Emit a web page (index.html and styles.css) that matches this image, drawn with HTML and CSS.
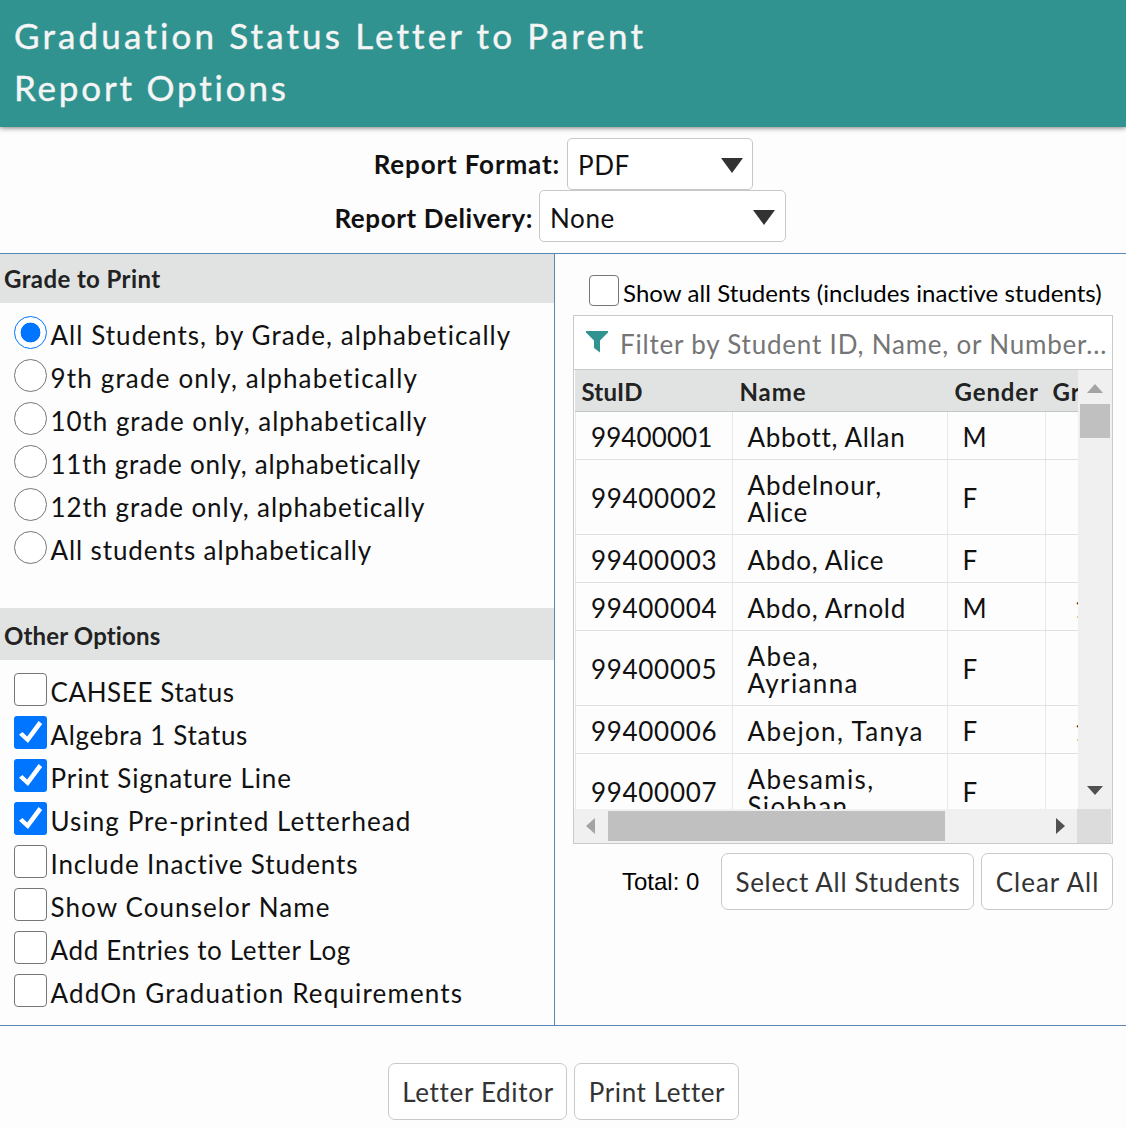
FILE: index.html
```html
<!DOCTYPE html>
<html lang="en">
<head>
<meta charset="utf-8">
<title>Graduation Status Letter to Parent</title>
<link rel="stylesheet" href="styles.css">
</head>
<body>
<header class="title-bar">
  <div class="title-main">Graduation Status Letter to Parent</div>
  <div class="title-sub">Report Options</div>
</header>

<section class="report">
  <div class="report-row format">
    <span class="report-label">Report Format:</span>
    <div class="select"><span>PDF</span><svg width="22" height="15" viewBox="0 0 22 15"><path d="M0 0H22L11 15Z" fill="#333"/></svg></div>
  </div>
  <div class="report-row delivery">
    <span class="report-label">Report Delivery:</span>
    <div class="select"><span>None</span><svg width="22" height="15" viewBox="0 0 22 15"><path d="M0 0H22L11 15Z" fill="#333"/></svg></div>
  </div>
</section>

<main class="columns">
  <section class="options">
    <h2 class="section-head grade-head">Grade to Print</h2>
    <div class="grades">
      <label class="row"><i class="radio on"></i><span>All Students, by Grade, alphabetically</span></label>
      <label class="row"><i class="radio"></i><span>9th grade only, alphabetically</span></label>
      <label class="row"><i class="radio"></i><span>10th grade only, alphabetically</span></label>
      <label class="row"><i class="radio"></i><span>11th grade only, alphabetically</span></label>
      <label class="row"><i class="radio"></i><span>12th grade only, alphabetically</span></label>
      <label class="row"><i class="radio"></i><span>All students alphabetically</span></label>
    </div>
    <h2 class="section-head other-head">Other Options</h2>
    <div class="others">
      <label class="row"><i class="check"></i><span>CAHSEE Status</span></label>
      <label class="row"><svg class="tick" viewBox="0 0 33 33"><rect width="33" height="33" rx="3" fill="#0075ff"/><path d="M5 18.8L8.4 16L13.2 20.4L24.6 5L28.2 8L14 27Z" fill="#fff"/></svg><span>Algebra 1 Status</span></label>
      <label class="row"><svg class="tick" viewBox="0 0 33 33"><rect width="33" height="33" rx="3" fill="#0075ff"/><path d="M5 18.8L8.4 16L13.2 20.4L24.6 5L28.2 8L14 27Z" fill="#fff"/></svg><span>Print Signature Line</span></label>
      <label class="row"><svg class="tick" viewBox="0 0 33 33"><rect width="33" height="33" rx="3" fill="#0075ff"/><path d="M5 18.8L8.4 16L13.2 20.4L24.6 5L28.2 8L14 27Z" fill="#fff"/></svg><span>Using Pre-printed Letterhead</span></label>
      <label class="row"><i class="check"></i><span>Include Inactive Students</span></label>
      <label class="row"><i class="check"></i><span>Show Counselor Name</span></label>
      <label class="row"><i class="check"></i><span>Add Entries to Letter Log</span></label>
      <label class="row"><i class="check"></i><span>AddOn Graduation Requirements</span></label>
    </div>
  </section>

  <section class="students">
    <label class="show-all"><i class="check"></i><span>Show all Students (includes inactive students)</span></label>
    <div class="picker">
      <div class="filter">
        <svg width="22" height="22" viewBox="0 0 22 22"><path d="M0 0H22V1.5L14 9.5V21.5L8 17V9.5L0 1.5Z" fill="#319390"/></svg>
        <span>Filter by Student ID, Name, or Number...</span>
      </div>
      <div class="viewport">
        <div class="table">
          <div class="tr th"><span>StuID</span><span>Name</span><span>Gender</span><span>Gr</span></div>
          <div class="tr"><span class="one">99400001</span><span>Abbott, Allan</span><span>M</span><span></span></div>
          <div class="tr tall"><span>99400002</span><span class="wide">Abdelnour,<br>Alice</span><span>F</span><span></span></div>
          <div class="tr"><span>99400003</span><span>Abdo, Alice</span><span>F</span><span></span></div>
          <div class="tr"><span>99400004</span><span>Abdo, Arnold</span><span>M</span><span>10</span></div>
          <div class="tr tall"><span>99400005</span><span class="wider">Abea,<br>Ayrianna</span><span>F</span><span></span></div>
          <div class="tr"><span>99400006</span><span class="wider">Abejon, Tanya</span><span>F</span><span>10</span></div>
          <div class="tr tall"><span>99400007</span><span class="wider">Abesamis,<br>Siobhan</span><span>F</span><span></span></div>
        </div>
        <div class="vbar">
          <svg width="16" height="9" viewBox="0 0 16 9"><path d="M8 0L16 9H0Z" fill="#a3a3a3"/></svg>
          <div class="vthumb"></div>
          <svg class="down" width="16" height="9" viewBox="0 0 16 9"><path d="M0 0H16L8 9Z" fill="#505050"/></svg>
        </div>
      </div>
      <div class="hbar">
        <svg width="9" height="16" viewBox="0 0 9 16"><path d="M9 0V16L0 8Z" fill="#a3a3a3"/></svg>
        <div class="hthumb"></div>
        <svg class="right" width="9" height="16" viewBox="0 0 9 16"><path d="M0 0V16L9 8Z" fill="#505050"/></svg>
        <div class="corner"></div>
      </div>
    </div>
    <div class="totals">
      <span class="total">Total: 0</span>
      <button class="btn select-all">Select All Students</button>
      <button class="btn clear-all">Clear All</button>
    </div>
  </section>
</main>

<footer class="actions">
  <button class="btn editor">Letter Editor</button>
  <button class="btn print">Print Letter</button>
</footer>
</body>
</html>
```
FILE: styles.css
```css
* { box-sizing: border-box; }
body { margin: 0; background: #fdfdfd; color: #111; font: 26px/30px Lato, "Open Sans", sans-serif; height: 1129px; overflow: hidden; }
svg { display: block; flex: none; }
span { white-space: nowrap; }

.title-bar { height: 127px; padding: 9px 0 0 14px; background: #319390; color: #f5f5f5; font-size: 35px; line-height: 52px; box-shadow: 0 1px 5px rgba(0, 0, 0, .5); -webkit-text-stroke: .4px #f5f5f5; }
.title-main { letter-spacing: 3.13px; }
.title-sub { letter-spacing: 2.8px; }

.report { height: 126px; padding-top: 11px; }
.report-row { display: flex; align-items: center; height: 52px; }
.report-label { font-weight: 700; text-align: right; flex: none; }
.format .report-label { width: 560px; letter-spacing: .85px; }
.delivery .report-label { width: 533px; letter-spacing: .6px; padding-top: 3px; }
.select { display: flex; align-items: center; justify-content: space-between; height: 52px; border: 1px solid #c8c8c8; border-radius: 5px; background: #fff; padding: 0 9px 0 10px; letter-spacing: .6px; }
.select span { padding-top: 1px; }
.select svg { margin-top: 2px; }
.format .select { width: 186px; margin-left: 7px; }
.delivery .select { width: 247px; margin-left: 6px; padding-right: 10px; }
.delivery .select span { padding-top: 3px; }

.columns { display: flex; height: 773px; border-top: 1px solid #5b87b5; border-bottom: 1px solid #5b87b5; }
.options { width: 555px; border-right: 1px solid #5b87b5; flex: none; }
.section-head { margin: 0; padding-left: 4px; background: #e1e3e2; color: #222; font-size: 24px; font-weight: 700; }
.grade-head { height: 49px; line-height: 50px; letter-spacing: .4px; }
.other-head { height: 52px; line-height: 55px; letter-spacing: .15px; }
.grades { height: 305px; padding: 8px 0 0 14px; }
.others { padding: 8px 0 0 14px; }
.row { display: flex; align-items: center; height: 43px; gap: 3.5px; }
.row span { padding-top: 5px; letter-spacing: 1.05px; }
.grades .row:nth-child(2) span { letter-spacing: 1.17px; }
.grades .row:nth-child(3) span { letter-spacing: .95px; }
.grades .row:nth-child(4) span { letter-spacing: .74px; }
.grades .row:nth-child(5) span { letter-spacing: .88px; }
.grades .row:nth-child(6) span { letter-spacing: .9px; }
.others .row:nth-child(1) span { letter-spacing: .6px; }
.others .row:nth-child(2) span { letter-spacing: .69px; }
.others .row:nth-child(3) span { letter-spacing: .9px; }
.others .row:nth-child(4) span { letter-spacing: 1.08px; }
.others .row:nth-child(5) span { letter-spacing: .87px; }
.others .row:nth-child(6) span { letter-spacing: 1.09px; }
.others .row:nth-child(7) span { letter-spacing: .66px; }
.others .row:nth-child(8) span { letter-spacing: 1.15px; }
.check, .radio { width: 33px; height: 33px; flex: none; border: 1px solid #767676; border-radius: 4px; background: #fff; }
.radio { border-radius: 50%; }
.radio.on { border-color: #0075ff; background: radial-gradient(circle, #0075ff 9.6px, #fff 10.2px); }
.tick { width: 33px; height: 33px; }

.students { flex: 1; padding: 21px 13px 0 18px; }
.show-all { display: flex; height: 40px; padding-left: 16px; gap: 4px; font-size: 24px; color: #000; }
.show-all .check { width: 30px; height: 31px; }
.show-all span { line-height: 36px; letter-spacing: .07px; }
.picker { height: 529px; border: 1px solid #c8cacb; background: #fff; }
.filter { display: flex; align-items: center; height: 54px; padding-left: 12px; gap: 12px; border-bottom: 1px solid #c8cacb; color: #757575; }
.filter svg { margin-top: -1px; }
.filter span { letter-spacing: .8px; padding-top: 3px; }
.viewport { display: flex; height: 439px; overflow: hidden; }
.table { width: 503px; margin-left: 1px; overflow: hidden; flex: none; }
.tr { display: grid; grid-template-columns: 158px 215px 98px 120px; height: 48px; border-bottom: 1px solid #dfe2e3; line-height: 27px; letter-spacing: .7px; background: #fdfdfd; }
.tr.tall { height: 75px; }
.tr > span { display: flex; align-items: center; padding: 3px 0 0 14.5px; border-right: 1px solid #e4eaec; }
.tr > span:first-child { border-left: 1px solid #e4eaec; padding-left: 15px; }
.tr > span:last-child { padding-left: 28.5px; border: 0; }
.tr .one { letter-spacing: .1px; }
.tr .wide { letter-spacing: 1px; }
.tr .wider { letter-spacing: 1.35px; }
.tr.th { height: 42px; background: #e1e3e2; border-color: #c3c6c7; font-size: 24px; font-weight: 700; color: #222; }
.tr.th > span, .tr.th > span:first-child, .tr.th > span:last-child { border: 0; padding: 2px 0 0 6.5px; letter-spacing: .9px; }
.tr.th > span:first-child { letter-spacing: .2px; }
.vbar { display: flex; flex-direction: column; align-items: center; flex: 1; background: #f0f0f0; padding-top: 14px; }
.vthumb { width: 30px; height: 34px; margin-top: 11px; background: #c0c0c0; }
.down { margin-top: auto; margin-bottom: 14px; }
.hbar { display: flex; align-items: center; height: 34px; background: #f0f0f0; padding-left: 12px; }
.hthumb { width: 337px; height: 30px; margin-left: 13px; background: #c0c0c0; }
.right { margin-left: 111px; }
.corner { width: 34px; height: 34px; margin: 0 1px 0 auto; background: #dcdcdc; }
.totals { display: flex; align-items: center; margin-top: 9px; }
.total { width: 99px; margin-left: 49px; font: 24px/30px "Liberation Sans", Arial, sans-serif; color: #000; }
.btn { height: 57px; padding: 0 0 0 1px; border: 1px solid #c9c9c9; border-radius: 7px; background: #fff; color: #333; font: 26px/30px Lato, "Open Sans", sans-serif; white-space: nowrap; }
.select-all { width: 253px; letter-spacing: .68px; }
.clear-all { width: 132px; margin-left: 7px; letter-spacing: 1px; }

.actions { display: flex; gap: 7px; padding: 37px 0 0 388px; }
.editor { width: 179px; letter-spacing: .7px; }
.print { width: 165px; letter-spacing: .6px; }
```
